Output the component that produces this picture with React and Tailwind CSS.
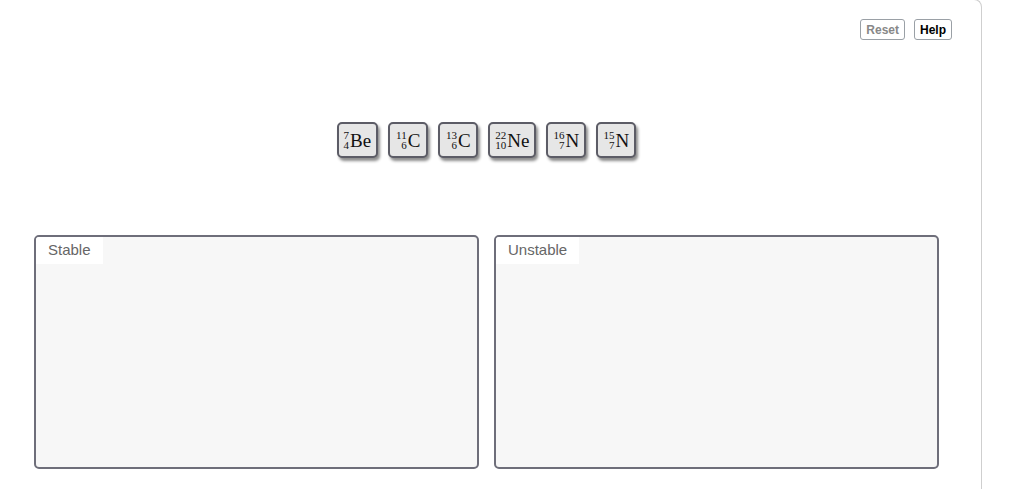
const nuclides = [
  { mass: "7", z: "4", sym: "Be" },
  { mass: "11", z: "6", sym: "C" },
  { mass: "13", z: "6", sym: "C" },
  { mass: "22", z: "10", sym: "Ne" },
  { mass: "16", z: "7", sym: "N" },
  { mass: "15", z: "7", sym: "N" },
];

const Tile = ({ mass, z, sym }) => (
  <div className="h-[36px] min-w-[40px] px-[5px] flex items-center justify-center bg-[#e6e6e6] border-2 border-[#5c5c66] rounded-[5px] shadow-[2px_3px_3px_rgba(0,0,0,0.45)] font-['Liberation_Serif',serif] text-[#111]">
    <span className="flex flex-col items-end leading-[10px] text-[11px] mr-[1px]">
      <span>{mass}</span>
      <span>{z}</span>
    </span>
    <span className="text-[19px] leading-none">{sym}</span>
  </div>
);

const Bin = ({ label }) => (
  <div className="flex-1 h-[234px] bg-[#f7f7f7] border-2 border-[#6e6e7a] rounded-[5px]">
    <div className="inline-block bg-white px-[12px] pt-[2px] pb-[2px] text-[15px] text-[#666] rounded-tl-[3px]">
      {label}
    </div>
  </div>
);

export default function App() {
  return (
    <div className="w-[1024px] h-[490px] bg-white font-['Liberation_Sans',Arial,sans-serif] overflow-hidden">
      <div className="w-[982px] h-[490px] border-r border-t border-[#cfcfcf] rounded-tr-[8px] -mt-px">
        <div className="flex justify-end gap-[9px] pt-[19px] pr-[29px]">
          <button className="h-[21px] px-[5px] border border-[#9aa0a6] rounded-[3px] text-[12px] font-bold text-[#888] leading-none">
            Reset
          </button>
          <button className="h-[21px] px-[5px] border border-[#9aa0a6] rounded-[3px] text-[12px] font-bold text-black leading-none">
            Help
          </button>
        </div>
        <div className="flex justify-center gap-[10px] mt-[82px] pl-[3px] pr-[11px]">
          {nuclides.map((n, i) => (
            <Tile key={i} {...n} />
          ))}
        </div>
        <div className="flex gap-[15px] mt-[77px] pl-[34px] pr-[42px]">
          <Bin label="Stable" />
          <Bin label="Unstable" />
        </div>
      </div>
    </div>
  );
}
